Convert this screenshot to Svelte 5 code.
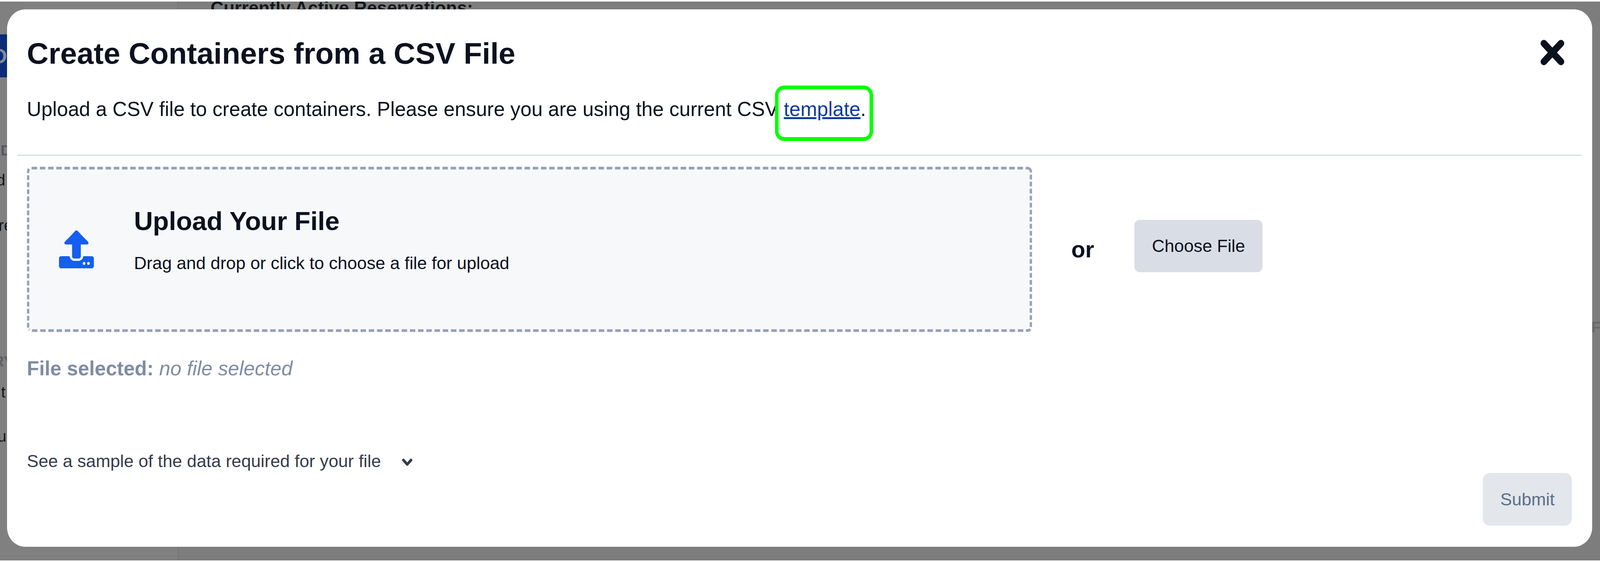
<script>
  const sideRows = [
    { cls: 'blue', text: 'D' },
    { cls: 'label', text: 'D' },
    { cls: 'bowl', text: 'd' },
    { cls: 're', text: 're' },
    { cls: 'ry', text: 'RY' },
    { cls: 'tee', text: 't' },
    { cls: 'you', text: 'u' },
    { cls: 'dot', text: '.' }
  ];
</script>

<div class="backdrop">
  <aside class="sidebar">
    {#each sideRows as row}
      <div class="side-row {row.cls}">{row.text}</div>
    {/each}
  </aside>
  <main class="page">
    <h2>Currently Active Reservations:</h2>
    <span class="page-edge">F</span>
  </main>
</div>

<div class="modal">
  <header class="head">
    <h1>Create Containers from a CSV File</h1>
    <button class="close" aria-label="Close">
      <svg viewBox="0 0 67 67" preserveAspectRatio="none">
        <path d="M10 10 L57 57 M57 10 L10 57" stroke="#0b111e" stroke-width="18" stroke-linecap="round" fill="none" />
      </svg>
    </button>
    <p>Upload a CSV file to create containers. Please ensure you are using the current CSV <span class="callout"><a href="#template">template</a><i class="ring"></i></span>.</p>
  </header>
  <hr />
  <section class="body">
    <div class="upload-row">
      <div class="dropzone">
        <svg class="upload-icon" viewBox="0 0 96 97" preserveAspectRatio="none">
          <path fill="#155eef" d="M48 0 C49.5 0 50.5 .6 51.5 1.6 L63 13 L79.5 28.5 C82.5 31.5 81 36 77 36 L60 36 L60 66 C60 69.5 57.5 72 54 72 L42 72 C38.5 72 36 69.5 36 66 L36 36 L19 36 C15 36 13.5 31.5 16.5 28.5 L33 13 L44.5 1.6 C45.5 .6 46.5 0 48 0 Z" />
          <path fill="#155eef" fill-rule="evenodd" d="M6 66 L29 66 C30 73 36 78 42 78 L54 78 C60 78 66 73 67 66 L90 66 C93.5 66 96 68.5 96 72 L96 91 C96 94.5 93.5 97 90 97 L6 97 C2.5 97 0 94.5 0 91 L0 72 C0 68.5 2.5 66 6 66 Z M69 88 A3.6 3.6 0 1 0 69 80.8 A3.6 3.6 0 1 0 69 88 Z M81 88 A3.6 3.6 0 1 0 81 80.8 A3.6 3.6 0 1 0 81 88 Z" />
        </svg>
        <div class="drop-text">
          <h3>Upload Your File</h3>
          <div class="hint">Drag and drop or click to choose a file for upload</div>
        </div>
      </div>
      <div class="or">or</div>
      <button class="choose">Choose File</button>
    </div>
    <div class="selected"><b>File selected:</b> <em>no file selected</em></div>
    <div class="sample">
      <span>See a sample of the data required for your file</span>
      <svg class="chev" viewBox="0 0 29 19" preserveAspectRatio="none">
        <path d="M4 4 L14.5 15 L25 4" stroke="#363b4c" stroke-width="7" stroke-linecap="round" stroke-linejoin="round" fill="none" />
      </svg>
    </div>
    <div class="foot"><button class="submit" disabled>Submit</button></div>
  </section>
</div>

<style>
  :global(:root) {
    --u: calc(100vw / 4400);
  }
  :global(body) {
    margin: 0;
    background: #fff;
    font-family: "Liberation Sans", Arial, sans-serif;
    color: #0b111e;
  }
  .backdrop {
    margin-top: 4px;
    height: 1431px;
    background: #7c7d7c;
    display: flex;
    overflow: hidden;
    position: relative;
  }
  .sidebar {
    width: calc(489 * var(--u));
    flex: none;
    background: #808080;
    border-right: 2px solid #747574;
    position: relative;
    overflow: hidden;
  }
  .side-row {
    position: absolute;
    left: 0;
    white-space: nowrap;
    color: #14161c;
    font-size: calc(44 * var(--u));
    line-height: 50px;
  }
  .blue {
    top: 84px;
    width: calc(60 * var(--u));
    height: 110px;
    background: #0b2a78;
    color: #7e889c;
    font-size: calc(58 * var(--u));
    font-weight: 700;
    line-height: 110px;
    text-indent: calc(-22 * var(--u));
  }
  .label { top: 356px; left: calc(2 * var(--u)); color: #55585f; font-weight: 700; font-size: calc(40 * var(--u)); }
  .bowl { top: 432px; left: calc(-10 * var(--u)); }
  .re { top: 548px; left: calc(-4 * var(--u)); }
  .ry { top: 896px; left: calc(-18 * var(--u)); color: #5e6066; font-weight: 700; font-size: calc(40 * var(--u)); }
  .tee { top: 975px; left: calc(3 * var(--u)); }
  .you { top: 1088px; left: calc(-7 * var(--u)); }
  .dot { top: 1278px; left: calc(-6 * var(--u)); font-size: calc(30 * var(--u)); }
  .page {
    flex: 1;
    position: relative;
    padding-left: calc(88 * var(--u));
  }
  h2 {
    margin: -14px 0 0;
    font-size: calc(49.5 * var(--u));
    line-height: 60px;
    font-weight: 700;
    color: #14161c;
  }
  .page-edge {
    position: absolute;
    right: -1px;
    top: 812px;
    font-size: calc(42 * var(--u));
    font-weight: 700;
    color: #66686c;
  }
  .modal {
    position: absolute;
    left: calc(19 * var(--u));
    right: calc(22 * var(--u));
    top: 24px;
    height: 1376px;
    box-sizing: border-box;
    background: #fff;
    border-radius: calc(50 * var(--u)) / 50px;
    padding: 0 calc(28 * var(--u));
    display: flex;
    flex-direction: column;
  }
  .head {
    padding: 67px calc(27 * var(--u)) 0;
    position: relative;
  }
  h1 {
    margin: 0;
    font-size: calc(82.5 * var(--u));
    line-height: 90px;
    font-weight: 700;
  }
  .close {
    position: absolute;
    top: 77px;
    right: calc(47 * var(--u));
    width: calc(67 * var(--u));
    height: 67px;
    padding: 0;
    border: 0;
    background: none;
    display: flex;
  }
  .close svg { width: 100%; height: 100%; }
  .head p {
    margin: 69px 0 0;
    font-size: calc(55 * var(--u));
    line-height: 60px;
  }
  .callout { position: relative; }
  a { color: #0b3aa5; }
  .ring {
    position: absolute;
    left: calc(-24 * var(--u));
    right: calc(-35 * var(--u));
    top: -32px;
    height: 142px;
    box-sizing: border-box;
    border: 10px solid #00ff00;
    border-left-width: calc(10 * var(--u));
    border-right-width: calc(10 * var(--u));
    border-radius: 24px;
  }
  hr {
    margin: 86px 0 0;
    border: 0;
    height: 3px;
    background: #d8dde5;
  }
  .body {
    padding: 28px calc(27 * var(--u)) 54px;
    flex: 1;
    display: flex;
    flex-direction: column;
  }
  .upload-row { display: flex; align-items: flex-start; }
  .dropzone {
    width: calc(2764 * var(--u));
    height: 423px;
    flex: none;
    box-sizing: border-box;
    background: #f7f8fa;
    border: 7px dashed #98a3b8;
    border-left-width: calc(7 * var(--u));
    border-right-width: calc(7 * var(--u));
    border-radius: 12px;
    display: flex;
    align-items: center;
    padding-left: calc(82 * var(--u));
  }
  .upload-icon { flex: none; width: calc(96 * var(--u)); height: 97px; }
  .drop-text { margin-left: calc(110 * var(--u)); padding-bottom: 51px; }
  h3 {
    margin: 0;
    font-size: calc(72 * var(--u));
    line-height: 80px;
    font-weight: 700;
  }
  .hint {
    margin-top: 41px;
    font-size: calc(48 * var(--u));
    line-height: 54px;
  }
  .or {
    margin: 176px 0 0 calc(108 * var(--u));
    font-size: calc(63 * var(--u));
    line-height: 72px;
    font-weight: 700;
  }
  .choose {
    margin: 136px 0 0 calc(111 * var(--u));
    width: calc(352 * var(--u));
    height: 134px;
    border: 0;
    border-radius: 14px;
    background: #d9dde5;
    font-family: "Liberation Sans", Arial, sans-serif;
    font-size: calc(48 * var(--u));
    line-height: 54px;
    color: #0b111e;
    padding: 0;
  }
  .selected {
    margin-top: 64px;
    font-size: calc(55 * var(--u));
    line-height: 60px;
    color: #7f8ca3;
  }
  .sample {
    margin-top: 180px;
    display: flex;
    align-items: center;
    gap: calc(58 * var(--u));
    font-size: calc(48 * var(--u));
    line-height: 54px;
    color: #363b4c;
  }
  .chev { margin-top: 4px; width: calc(29 * var(--u)); height: 19px; }
  .foot {
    margin-top: auto;
    display: flex;
    justify-content: flex-end;
  }
  .submit {
    width: calc(245 * var(--u));
    height: 135px;
    border: 0;
    border-radius: 18px;
    background: #e3e6eb;
    font-family: "Liberation Sans", Arial, sans-serif;
    font-size: calc(48 * var(--u));
    line-height: 54px;
    color: #5a6f8a;
    padding: 0;
  }
</style>
